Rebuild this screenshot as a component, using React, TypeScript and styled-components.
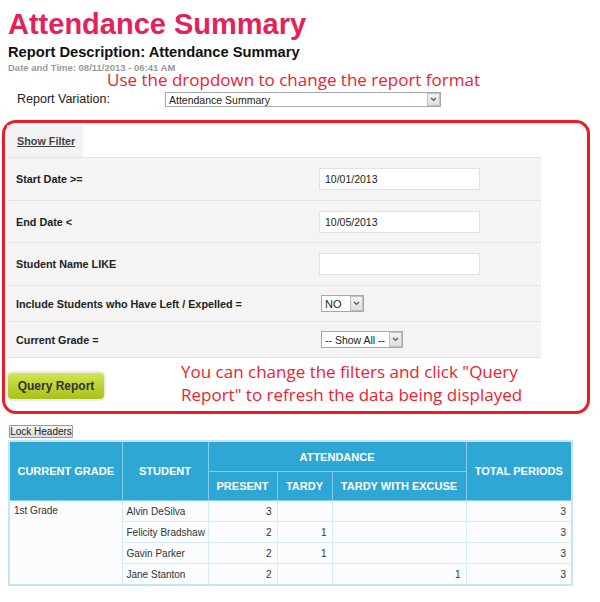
import React from "react";
import styled, { createGlobalStyle } from "styled-components";

const GlobalStyle = createGlobalStyle`
  html, body { margin: 0; padding: 0; background: #fff; }
  body { font-family: "Liberation Sans", Arial, sans-serif; color: #000; }
`;

const Page = styled.div`
  width: 600px;
  box-sizing: border-box;
  padding: 0 8px;
`;

const Title = styled.h1`
  margin: 0;
  padding-top: 10px;
  font-size: 29px;
  line-height: 29px;
  font-weight: bold;
  color: #e3215b;
`;

const Desc = styled.div`
  margin-top: 5px;
  font-size: 14.7px;
  line-height: 16px;
  font-weight: bold;
  color: #111;
`;

const DateLine = styled.div`
  margin-top: 3px;
  font-size: 9.5px;
  line-height: 10px;
  font-weight: bold;
  color: #9a9a9a;
`;

const Note = styled.div<{ $left: number; $top: number; $lh: number }>`
  font-family: "Open Sans", "Liberation Sans", sans-serif;
  font-size: 17px;
  line-height: ${(p) => p.$lh}px;
  color: #f0212f;
  margin-left: ${(p) => p.$left}px;
  margin-top: ${(p) => p.$top}px;
  white-space: nowrap;
`;

const VariationRow = styled.div`
  margin-top: 5px;
  display: flex;
  align-items: center;
  height: 15px;
  padding-left: 9px;
`;

const VariationLabel = styled.div`
  width: 148px;
  font-size: 12.5px;
  line-height: 15px;
  color: #222;
`;

const SelectBox = styled.div<{ $w: number; $h: number; $fs: number }>`
  display: flex;
  box-sizing: border-box;
  width: ${(p) => p.$w}px;
  height: ${(p) => p.$h}px;
  border: 1px solid #a8a8a8;
  background: #fff;
  font-size: ${(p) => p.$fs}px;
  color: #222;
`;

const SelectText = styled.div`
  flex: 1;
  padding-left: 3px;
  display: flex;
  align-items: center;
  white-space: nowrap;
  overflow: hidden;
`;

const SelectArrow = styled.div`
  width: 13px;
  box-sizing: border-box;
  border: 1px solid #c0c0c0;
  background: linear-gradient(#f4f4f4, #dedede);
  display: flex;
  align-items: center;
  justify-content: center;
`;

const RedBox = styled.div`
  margin-top: 13px;
  margin-left: -6px;
  width: 588px;
  box-sizing: border-box;
  border: 3px solid #ed1c24;
  border-radius: 14px;
  padding: 2px 2px 0 2px;
`;

const Tab = styled.div`
  width: 76px;
  height: 32px;
  box-sizing: border-box;
  background: #f3f3f3;
  padding-left: 10px;
  display: flex;
  align-items: center;
  font-size: 10.8px;
  font-weight: bold;
  color: #444;
  text-decoration: underline;
`;

const FilterTable = styled.div`
  width: 534px;
  background: #f4f4f4;
  border-bottom: 1px solid #e4e4e4;
`;

const FilterRow = styled.div<{ $h: number }>`
  display: grid;
  grid-template-columns: 312px 1fr;
  align-items: center;
  height: ${(p) => p.$h}px;
  box-sizing: border-box;
  border-top: 1px solid #e4e4e4;
`;

const FilterLabel = styled.div`
  padding-left: 9px;
  font-size: 10.8px;
  font-weight: bold;
  color: #222;
`;

const TextInput = styled.div`
  width: 161px;
  height: 22px;
  box-sizing: border-box;
  border: 1px solid #e2e2e2;
  background: #fff;
  padding-left: 5px;
  display: flex;
  align-items: center;
  font-size: 10.5px;
  color: #222;
`;

const SelectWrap = styled.div`
  margin-left: 2px;
`;

const BottomRow = styled.div`
  display: flex;
  align-items: flex-start;
`;

const QueryButton = styled.div`
  margin: 15px 0 12px 1px;
  width: 96px;
  height: 26px;
  box-sizing: border-box;
  border-radius: 4px;
  background: linear-gradient(#d3e34f, #a9c11b);
  box-shadow: 0 0 0 2px #ececec;
  display: flex;
  align-items: center;
  justify-content: center;
  font-size: 12px;
  font-weight: bold;
  color: #333;
`;

const LockButton = styled.div`
  margin-top: 11px;
  margin-left: 1px;
  width: 64px;
  height: 13px;
  box-sizing: border-box;
  border: 1px solid #9a9a9a;
  border-radius: 1px;
  background: linear-gradient(#f6f6f6, #dcdcdc);
  display: flex;
  align-items: center;
  justify-content: center;
  font-size: 10px;
  color: #222;
`;

const Table = styled.table`
  margin-top: 2px;
  border-collapse: collapse;
  table-layout: fixed;
  width: 563px;
  border: 2px solid #c3e5f4;
`;

const Th = styled.th<{ $h?: number }>`
  background: #2ea7d4;
  color: #fff;
  font-size: 11px;
  font-weight: bold;
  text-align: center;
  border: 1px solid #86cfec;
  padding: 0 3px;
  height: ${(p) => p.$h ?? 28}px;
  white-space: nowrap;
`;

const Td = styled.td<{ $num?: boolean; $top?: boolean }>`
  background: #fafcfe;
  border: 1px solid #d3ecf8;
  font-size: 10px;
  color: #333;
  height: 20px;
  padding: 0 ${(p) => (p.$num ? 5 : 4)}px;
  text-align: ${(p) => (p.$num ? "right" : "left")};
  vertical-align: ${(p) => (p.$top ? "top" : "middle")};
  line-height: ${(p) => (p.$top ? "20px" : "normal")};
  white-space: nowrap;
`;

const Chevron = () => (
  <svg width="7" height="5" viewBox="0 0 7 5">
    <polyline points="1,1 3.5,3.5 6,1" fill="none" stroke="#555" strokeWidth="1.2" />
  </svg>
);

const Select = ({ w, h, fs, text }: { w: number; h: number; fs: number; text: string }) => (
  <SelectBox $w={w} $h={h} $fs={fs}>
    <SelectText>{text}</SelectText>
    <SelectArrow>
      <Chevron />
    </SelectArrow>
  </SelectBox>
);

const rows = [
  { student: "Alvin DeSilva", present: "3", tardy: "", excuse: "", total: "3" },
  { student: "Felicity Bradshaw", present: "2", tardy: "1", excuse: "", total: "3" },
  { student: "Gavin Parker", present: "2", tardy: "1", excuse: "", total: "3" },
  { student: "Jane Stanton", present: "2", tardy: "", excuse: "1", total: "3" },
];

export default function App() {
  return (
    <Page>
      <GlobalStyle />
      <Title>Attendance Summary</Title>
      <Desc>Report Description: Attendance Summary</Desc>
      <DateLine>Date and Time: 08/11/2013 - 06:41 AM</DateLine>
      <Note $left={99} $top={0} $lh={14}>
        Use the dropdown to change the report format
      </Note>
      <VariationRow>
        <VariationLabel>Report Variation:</VariationLabel>
        <Select w={276} h={15} fs={10.5} text="Attendance Summary" />
      </VariationRow>

      <RedBox>
        <Tab>Show Filter</Tab>
        <FilterTable>
          <FilterRow $h={43}>
            <FilterLabel>Start Date &gt;=</FilterLabel>
            <TextInput>10/01/2013</TextInput>
          </FilterRow>
          <FilterRow $h={42}>
            <FilterLabel>End Date &lt;</FilterLabel>
            <TextInput>10/05/2013</TextInput>
          </FilterRow>
          <FilterRow $h={43}>
            <FilterLabel>Student Name LIKE</FilterLabel>
            <TextInput />
          </FilterRow>
          <FilterRow $h={36}>
            <FilterLabel>Include Students who Have Left / Expelled =</FilterLabel>
            <SelectWrap>
              <Select w={43} h={17} fs={11} text="NO" />
            </SelectWrap>
          </FilterRow>
          <FilterRow $h={36}>
            <FilterLabel>Current Grade =</FilterLabel>
            <SelectWrap>
              <Select w={82} h={17} fs={10.5} text="-- Show All --" />
            </SelectWrap>
          </FilterRow>
        </FilterTable>
        <BottomRow>
          <QueryButton>Query Report</QueryButton>
          <Note $left={77} $top={2} $lh={23}>
            You can change the filters and click "Query
            <br />
            Report" to refresh the data being displayed
          </Note>
        </BottomRow>
      </RedBox>

      <LockButton>Lock Headers</LockButton>
      <Table>
        <colgroup>
          <col style={{ width: 113 }} />
          <col style={{ width: 86 }} />
          <col style={{ width: 69 }} />
          <col style={{ width: 55 }} />
          <col style={{ width: 134 }} />
          <col style={{ width: 106 }} />
        </colgroup>
        <thead>
          <tr>
            <Th rowSpan={2}>CURRENT GRADE</Th>
            <Th rowSpan={2}>STUDENT</Th>
            <Th colSpan={3} $h={29}>ATTENDANCE</Th>
            <Th rowSpan={2}>TOTAL PERIODS</Th>
          </tr>
          <tr>
            <Th $h={28}>PRESENT</Th>
            <Th $h={28}>TARDY</Th>
            <Th $h={28}>TARDY WITH EXCUSE</Th>
          </tr>
        </thead>
        <tbody>
          {rows.map((r, i) => (
            <tr key={r.student}>
              {i === 0 && (
                <Td rowSpan={4} $top>
                  1st Grade
                </Td>
              )}
              <Td>{r.student}</Td>
              <Td $num>{r.present}</Td>
              <Td $num>{r.tardy}</Td>
              <Td $num>{r.excuse}</Td>
              <Td $num>{r.total}</Td>
            </tr>
          ))}
        </tbody>
      </Table>
    </Page>
  );
}
